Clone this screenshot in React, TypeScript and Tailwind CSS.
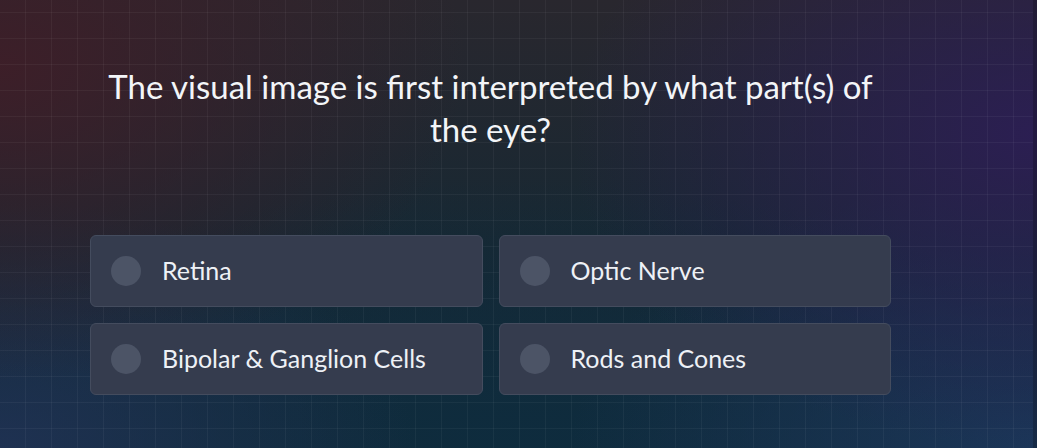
import React, { useState } from 'react';

const options = ['Retina', 'Optic Nerve', 'Bipolar & Ganglion Cells', 'Rods and Cones'];

export default function App() {
  const [selected, setSelected] = useState<number | null>(null);

  return (
    <div className="flex h-[448px] w-full overflow-hidden bg-[#182532] bg-[radial-gradient(ellipse_45%_70%_at_0%_15%,rgba(62,30,40,0.95),transparent),radial-gradient(ellipse_45%_70%_at_100%_30%,rgba(44,30,84,0.95),transparent),radial-gradient(ellipse_40%_55%_at_0%_100%,rgba(32,50,84,0.9),transparent),radial-gradient(ellipse_45%_60%_at_100%_100%,rgba(28,54,90,0.95),transparent),radial-gradient(ellipse_60%_60%_at_50%_100%,rgba(14,44,62,0.9),transparent),linear-gradient(180deg,#29272e_0%,#172833_55%,#112a3a_100%)] font-['Lato',sans-serif]">
      <div className="flex-1 bg-[linear-gradient(rgba(255,255,255,0.045)_1px,transparent_1px),linear-gradient(90deg,rgba(255,255,255,0.045)_1px,transparent_1px)] bg-[size:26px_26px] bg-[position:-1px_12px]">
        <div className="ml-[90px] w-[801px] pt-[65px]">
          <h1 className="px-2 text-center text-[33px] leading-[43px] font-normal text-[#f3f5f8]">
            The visual image is first interpreted by what part(s) of the eye?
          </h1>

          <div className="mt-[84px] grid grid-cols-2 gap-4">
            {options.map((opt, i) => (
              <button
                key={opt}
                type="button"
                onClick={() => setSelected(i)}
                className="flex h-[72px] items-center gap-[21px] rounded-md border border-[#444c5e] bg-[#353c4e] pl-5 text-left"
              >
                <span
                  className={
                    selected === i
                      ? 'h-[30px] w-[30px] shrink-0 rounded-full bg-[#8fa0c0]'
                      : 'h-[30px] w-[30px] shrink-0 rounded-full bg-[#4c5466]'
                  }
                />
                <span className="text-[25px] text-[#eef1f6]">{opt}</span>
              </button>
            ))}
          </div>
        </div>
      </div>
      <div className="w-[4px] bg-black/20" />
    </div>
  );
}
